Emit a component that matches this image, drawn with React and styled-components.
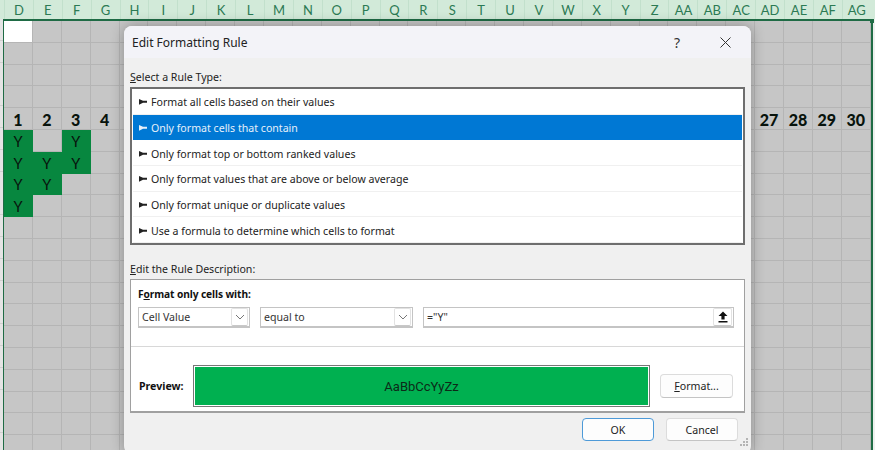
import React from 'react'
import styled, {createGlobalStyle} from 'styled-components'

const GlobalStyle = createGlobalStyle`
  html, body {
    margin: 0;
    padding: 0;
    overflow: hidden;
    background: #eef0ee;
  }
`

const Page = styled.div`
  position: relative;
  width: 875px;
  height: 450px;
  overflow: hidden;
  font-family: "Noto Sans", "Open Sans", sans-serif;
  color: #1a1a1a;
`

const ColumnHeader = styled.div`
  display: grid;
  grid-template-columns: repeat(30, 28.9px);
  height: 19px;
  padding-left: 4px;
  background: #d2ead9;
`

const ColumnLabel = styled.div`
  display: flex;
  align-items: center;
  justify-content: center;
  padding-top: 1px;
  border-left: 1px solid #c2e0cc;
  font-family: Lato, sans-serif;
  font-size: 13px;
  color: #2c7a54;
`

const SheetBody = styled.div`
  display: flex;
  height: 431px;
`

const Gutter = styled.div`
  width: 3px;
  background: repeating-linear-gradient(#e4e4e4 0, #e4e4e4 21px, #cfcfcf 21px, #cfcfcf 21.8px);
`

const Selection = styled.div`
  position: relative;
  display: grid;
  grid-template-columns: repeat(30, 28.9px);
  grid-auto-rows: 21.8px;
  align-content: start;
  height: 431px;
  border-top: 2px solid #1f6b45;
  border-left: 1px solid #1f6b45;
  border-right: 2px solid #1f6b45;
  box-sizing: border-box;
  background: #c6c6c6;
`

const Cell = styled.div`
  display: flex;
  align-items: center;
  justify-content: center;
  box-sizing: border-box;
  padding-top: ${props => props.$bold ? 1 : 2}px;
  border-right: 1px solid ${props => props.$filled ? 'transparent' : '#b5b5b5'};
  border-bottom: 1px solid ${props => props.$filled ? 'transparent' : '#b5b5b5'};
  background: ${props => props.$filled ? '#07873f' : props.$blank ? '#ffffff' : 'transparent'};
  font-family: Lato, sans-serif;
  font-size: ${props => props.$bold ? 16 : 14.5}px;
  font-weight: ${props => props.$bold ? 900 : 400};
  color: #08130c;
`

const Handle = styled.div`
  position: absolute;
  top: -2px;
  right: -3px;
  width: 4px;
  height: 4px;
  background: #1f6b45;
`

const Dialog = styled.div`
  position: absolute;
  left: 124px;
  top: 26px;
  width: 627px;
  height: 428px;
  border-radius: 8px;
  background: #f0f0f0;
  box-shadow: 0 0 14px rgba(0, 0, 0, 0.3);
  overflow: hidden;
`

const TitleBar = styled.div`
  display: flex;
  align-items: center;
  height: 32px;
  padding: 0 20px 0 8px;
  background: #f3f3f8;
`

const Title = styled.div`
  flex: 1;
  font-size: 12px;
  color: #222;
`

const HelpMark = styled.div`
  width: 20px;
  margin-right: 33px;
  text-align: center;
  font-size: 14px;
  color: #333;
`

const DialogBody = styled.div`
  display: flex;
  flex-direction: column;
  padding: 11px 6px 0 6px;
`

const SectionLabel = styled.div`
  height: 18px;
  line-height: 16px;
  font-size: 10.6px;
  color: #222;
`

const RuleList = styled.div`
  display: flex;
  flex-direction: column;
  box-sizing: border-box;
  height: 158px;
  padding: 0 1px;
  border: 2px solid #6e6e6e;
  background: #fff;
`

const RuleRow = styled.div`
  display: flex;
  align-items: center;
  gap: 4px;
  flex: 1;
  box-sizing: border-box;
  padding: 2px 0 0 6px;
  font-size: 10.6px;
  color: ${props => props.$active ? '#e6f0fa' : '#222'};
  background: ${props => props.$active ? '#0078d4' : '#fff'};
  border-bottom: 1px solid ${props => props.$active ? '#0078d4' : '#f0f0f0'};
`

const RuleLabelGap = styled.div`
  height: 16px;
  flex-shrink: 0;
`

const DescriptionBox = styled.div`
  display: flex;
  flex-direction: column;
  box-sizing: border-box;
  height: 134px;
  border: 1px solid #a0a0a0;
  border-bottom-width: 2px;
  background: #fff;
`

const ConditionArea = styled.div`
  box-sizing: border-box;
  height: 67px;
  padding: 6px 7px 0 7px;
  border-bottom: 1px solid #d8d8d8;
`

const BoldLabel = styled.div`
  font-size: 10.2px;
  font-weight: 700;
  line-height: 16px;
  letter-spacing: -0.1px;
  color: #111;
`

const ConditionRow = styled.div`
  display: flex;
  gap: 10px;
  margin-top: 5px;
`

const Field = styled.div`
  display: flex;
  align-items: center;
  justify-content: space-between;
  box-sizing: border-box;
  width: ${props => props.$width}px;
  height: 21px;
  padding: 0 1px 0 3px;
  border: 1px solid #c4c4c4;
  border-bottom-width: 2px;
  font-size: 10.6px;
  color: #333;
`

const FieldButton = styled.div`
  display: flex;
  align-items: center;
  justify-content: center;
  box-sizing: border-box;
  width: ${props => props.$wide ? 19 : 17}px;
  height: 18px;
  border: 1px solid #e2e2e2;
  border-bottom-color: #c8c8c8;
  border-radius: 2px;
`

const PreviewRow = styled.div`
  display: flex;
  align-items: center;
  padding: 18px 0 0 8px;
`

const PreviewLabel = styled.div`
  flex: 0 0 54px;
  font-size: 10.6px;
  font-weight: 700;
  color: #111;
`

const Swatch = styled.div`
  display: flex;
  flex: 0 0 457px;
  align-items: center;
  justify-content: center;
  box-sizing: border-box;
  height: 42px;
  border: 1px solid #777;
  box-shadow: inset 0 0 0 1px #fff;
  background: #00b050;
  font-family: Roboto, sans-serif;
  font-size: 13px;
  color: #0c2a18;
`

const Button = styled.div`
  display: flex;
  align-items: center;
  justify-content: center;
  box-sizing: border-box;
  flex-shrink: 0;
  width: ${props => props.$width || 72}px;
  height: ${props => props.$height || 23}px;
  border: 1px solid ${props => props.$primary ? '#4d9ad8' : '#dcdcdc'};
  border-bottom-color: ${props => props.$primary ? '#4d9ad8' : '#c4c4c4'};
  border-radius: 4px;
  background: #fdfdfd;
  font-size: 10.6px;
  color: #222;
`

const FormatButton = styled(Button)`
  margin-left: 10px;
`

const ActionRow = styled.div`
  display: flex;
  justify-content: flex-end;
  gap: 12px;
  margin-top: 5px;
  padding-right: 7px;
`

const Grip = styled.svg`
  position: absolute;
  right: 2px;
  bottom: 6px;
`

const Key = styled.span`
  text-decoration: underline;
  text-underline-offset: 1px;
`

const COLUMNS = ['D','E','F','G','H','I','J','K','L','M','N','O','P','Q','R','S','T','U','V','W','X','Y','Z','AA','AB','AC','AD','AE','AF','AG']

const NUMBERS = {0: '1', 1: '2', 2: '3', 3: '4', 26: '27', 27: '28', 28: '29', 29: '30'}

const FILLED = {5: [0, 2], 6: [0, 1, 2], 7: [0, 1], 8: [0]}

const RULES = [
  'Format all cells based on their values',
  'Only format cells that contain',
  'Only format top or bottom ranked values',
  'Only format values that are above or below average',
  'Only format unique or duplicate values',
  'Use a formula to determine which cells to format',
]

const Pointer = ({color}) => (
  <svg width="8" height="6" viewBox="0 0 8 6">
    <path d="M0 0 L4 1.8 H8 V3.8 H4 L0 5.8 Z" fill={color} />
  </svg>
)

const Close = () => (
  <svg width="11" height="11" viewBox="0 0 11 11">
    <path d="M0.5 0.5 L10.5 10.5 M10.5 0.5 L0.5 10.5" stroke="#333" strokeWidth="1" fill="none" />
  </svg>
)

const Chevron = () => (
  <svg width="10" height="6" viewBox="0 0 10 6">
    <path d="M1 1 L5 5 L9 1" stroke="#777" strokeWidth="1" fill="none" />
  </svg>
)

const UploadArrow = () => (
  <svg width="10" height="12" viewBox="0 0 10 12">
    <path d="M5 0.5 L9.5 5 H6.6 V8.5 H3.4 V5 H0.5 Z M0.5 10 H9.5 V11.5 H0.5 Z" fill="#111" />
  </svg>
)

const ResizeGrip = () => (
  <Grip width="10" height="10" viewBox="0 0 10 10">
    <path d="M7 0h2v2H7z M4 3h2v2H4z M7 3h2v2H7z M1 6h2v2H1z M4 6h2v2H4z M7 6h2v2H7z" fill="#b4b4b4" />
  </Grip>
)

const renderCell = (row, col) => {
  const key = `${row}-${col}`
  if (row === 0 && col === 0) return <Cell key={key} $blank />
  if (row === 4 && NUMBERS[col]) return <Cell key={key} $bold>{NUMBERS[col]}</Cell>
  if (FILLED[row] && FILLED[row].includes(col)) return <Cell key={key} $filled>Y</Cell>
  return <Cell key={key} />
}

const App = () => {
  const cells = []
  for (let row = 0; row < 20; row++) {
    for (let col = 0; col < 30; col++) {
      cells.push(renderCell(row, col))
    }
  }

  return (
    <Page>
      <GlobalStyle />
      <ColumnHeader>
        {COLUMNS.map(name => <ColumnLabel key={name}>{name}</ColumnLabel>)}
      </ColumnHeader>
      <SheetBody>
        <Gutter />
        <Selection>
          {cells}
          <Handle />
        </Selection>
      </SheetBody>
      <Dialog>
        <TitleBar>
          <Title>Edit Formatting Rule</Title>
          <HelpMark>?</HelpMark>
          <Close />
        </TitleBar>
        <DialogBody>
          <SectionLabel><Key>S</Key>elect a Rule Type:</SectionLabel>
          <RuleList>
            {RULES.map((rule, index) => (
              <RuleRow key={rule} $active={index === 1}>
                <Pointer color={index === 1 ? '#e6f0fa' : '#222'} />
                {rule}
              </RuleRow>
            ))}
          </RuleList>
          <RuleLabelGap />
          <SectionLabel><Key>E</Key>dit the Rule Description:</SectionLabel>
          <DescriptionBox>
            <ConditionArea>
              <BoldLabel>F<Key>o</Key>rmat only cells with:</BoldLabel>
              <ConditionRow>
                <Field $width={112}>
                  Cell Value
                  <FieldButton><Chevron /></FieldButton>
                </Field>
                <Field $width={153}>
                  equal to
                  <FieldButton><Chevron /></FieldButton>
                </Field>
                <Field $width={311}>
                  ="Y"
                  <FieldButton $wide><UploadArrow /></FieldButton>
                </Field>
              </ConditionRow>
            </ConditionArea>
            <PreviewRow>
              <PreviewLabel>Preview:</PreviewLabel>
              <Swatch>AaBbCcYyZz</Swatch>
              <FormatButton $width={73} $height={24}><Key>F</Key>ormat...</FormatButton>
            </PreviewRow>
          </DescriptionBox>
          <ActionRow>
            <Button $primary>OK</Button>
            <Button>Cancel</Button>
          </ActionRow>
        </DialogBody>
        <ResizeGrip />
      </Dialog>
    </Page>
  )
}

export default App
